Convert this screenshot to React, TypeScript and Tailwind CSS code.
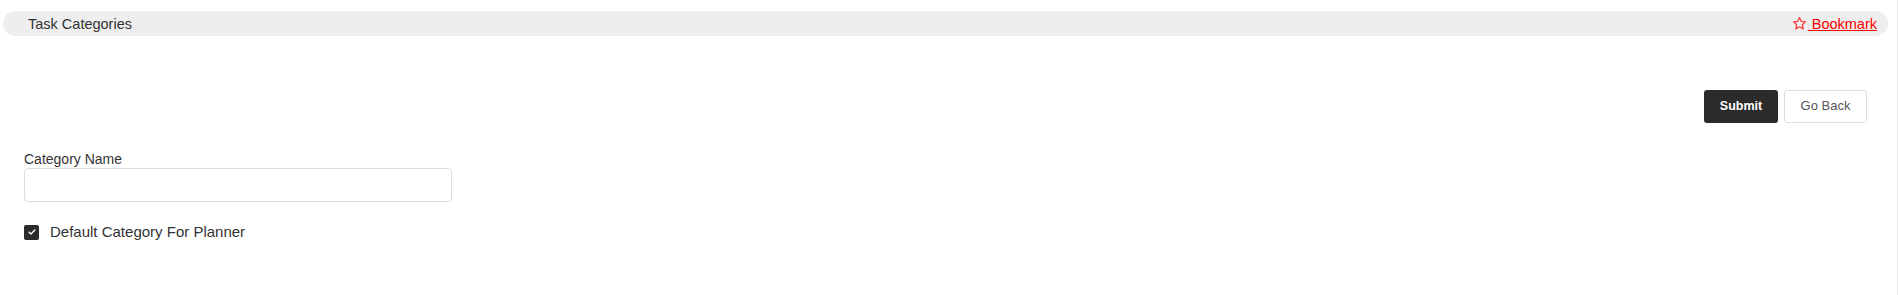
import { useState } from 'react';

function StarIcon() {
  return (
    <svg width="15" height="15" viewBox="0 0 24 24" fill="none" stroke="currentColor" strokeWidth="2" strokeLinejoin="round" className="inline-block">
      <path d="M12 2.5l2.9 6.1 6.6.8-4.9 4.6 1.3 6.6L12 17.3l-5.9 3.3 1.3-6.6-4.9-4.6 6.6-.8z" />
    </svg>
  );
}

export default function App() {
  const [name, setName] = useState('');
  const [isDefault, setIsDefault] = useState(true);

  return (
    <div className="w-[1898px] h-[295px] bg-white border-r border-[#e6e6e6] font-['Liberation_Sans',Arial,sans-serif] text-[#333]">
      <div className="pt-[11px] pl-[3px] pr-[9px]">
        <div className="h-[25px] rounded-full bg-[#eeeeee] flex items-center justify-between pl-[25px] pr-[11px] pt-[2px]">
          <span className="text-[14.5px] text-[#333]">Task Categories</span>
          <a href="#" className="text-[14.5px] text-[#ff0000] underline flex items-center gap-[1px]">
            <span className="text-[#ff3b3b] -mt-[2px]"><StarIcon /></span>
            <span>&nbsp;Bookmark</span>
          </a>
        </div>
      </div>

      <div className="flex justify-end gap-[6px] pr-[30px] mt-[54px]">
        <button className="h-[33px] w-[74px] rounded-[3px] bg-[#2b2b2b] text-white text-[12.5px] font-bold pb-[1px]">
          Submit
        </button>
        <button className="h-[33px] w-[83px] rounded-[3px] bg-white border border-[#dcdce4] text-[#555] text-[13px] pb-[2px]">
          Go Back
        </button>
      </div>

      <div className="pl-[24px] mt-[28px]">
        <label className="block text-[14px] leading-[16px] text-[#333]">Category Name</label>
        <input
          value={name}
          onChange={(e) => setName(e.target.value)}
          className="mt-[1px] block w-[428px] h-[34px] rounded-[4px] border border-[#dcdce4] px-2 text-[14px] outline-none"
        />
        <label className="flex items-center gap-[11px] mt-[19px] cursor-pointer">
          <span
            onClick={() => setIsDefault(!isDefault)}
            className={
              'w-[15px] h-[15px] rounded-[2px] flex items-center justify-center ' +
              (isDefault ? 'bg-[#2b2b2b]' : 'border border-[#999] bg-white')
            }
          >
            {isDefault && (
              <svg width="10" height="10" viewBox="0 0 12 12" fill="none" stroke="white" strokeWidth="1.6" strokeLinecap="round" strokeLinejoin="round">
                <path d="M2.5 6.2l2.3 2.3 4.7-4.9" />
              </svg>
            )}
          </span>
          <span className="text-[15px] text-[#333]">Default Category For Planner</span>
        </label>
      </div>
    </div>
  );
}
